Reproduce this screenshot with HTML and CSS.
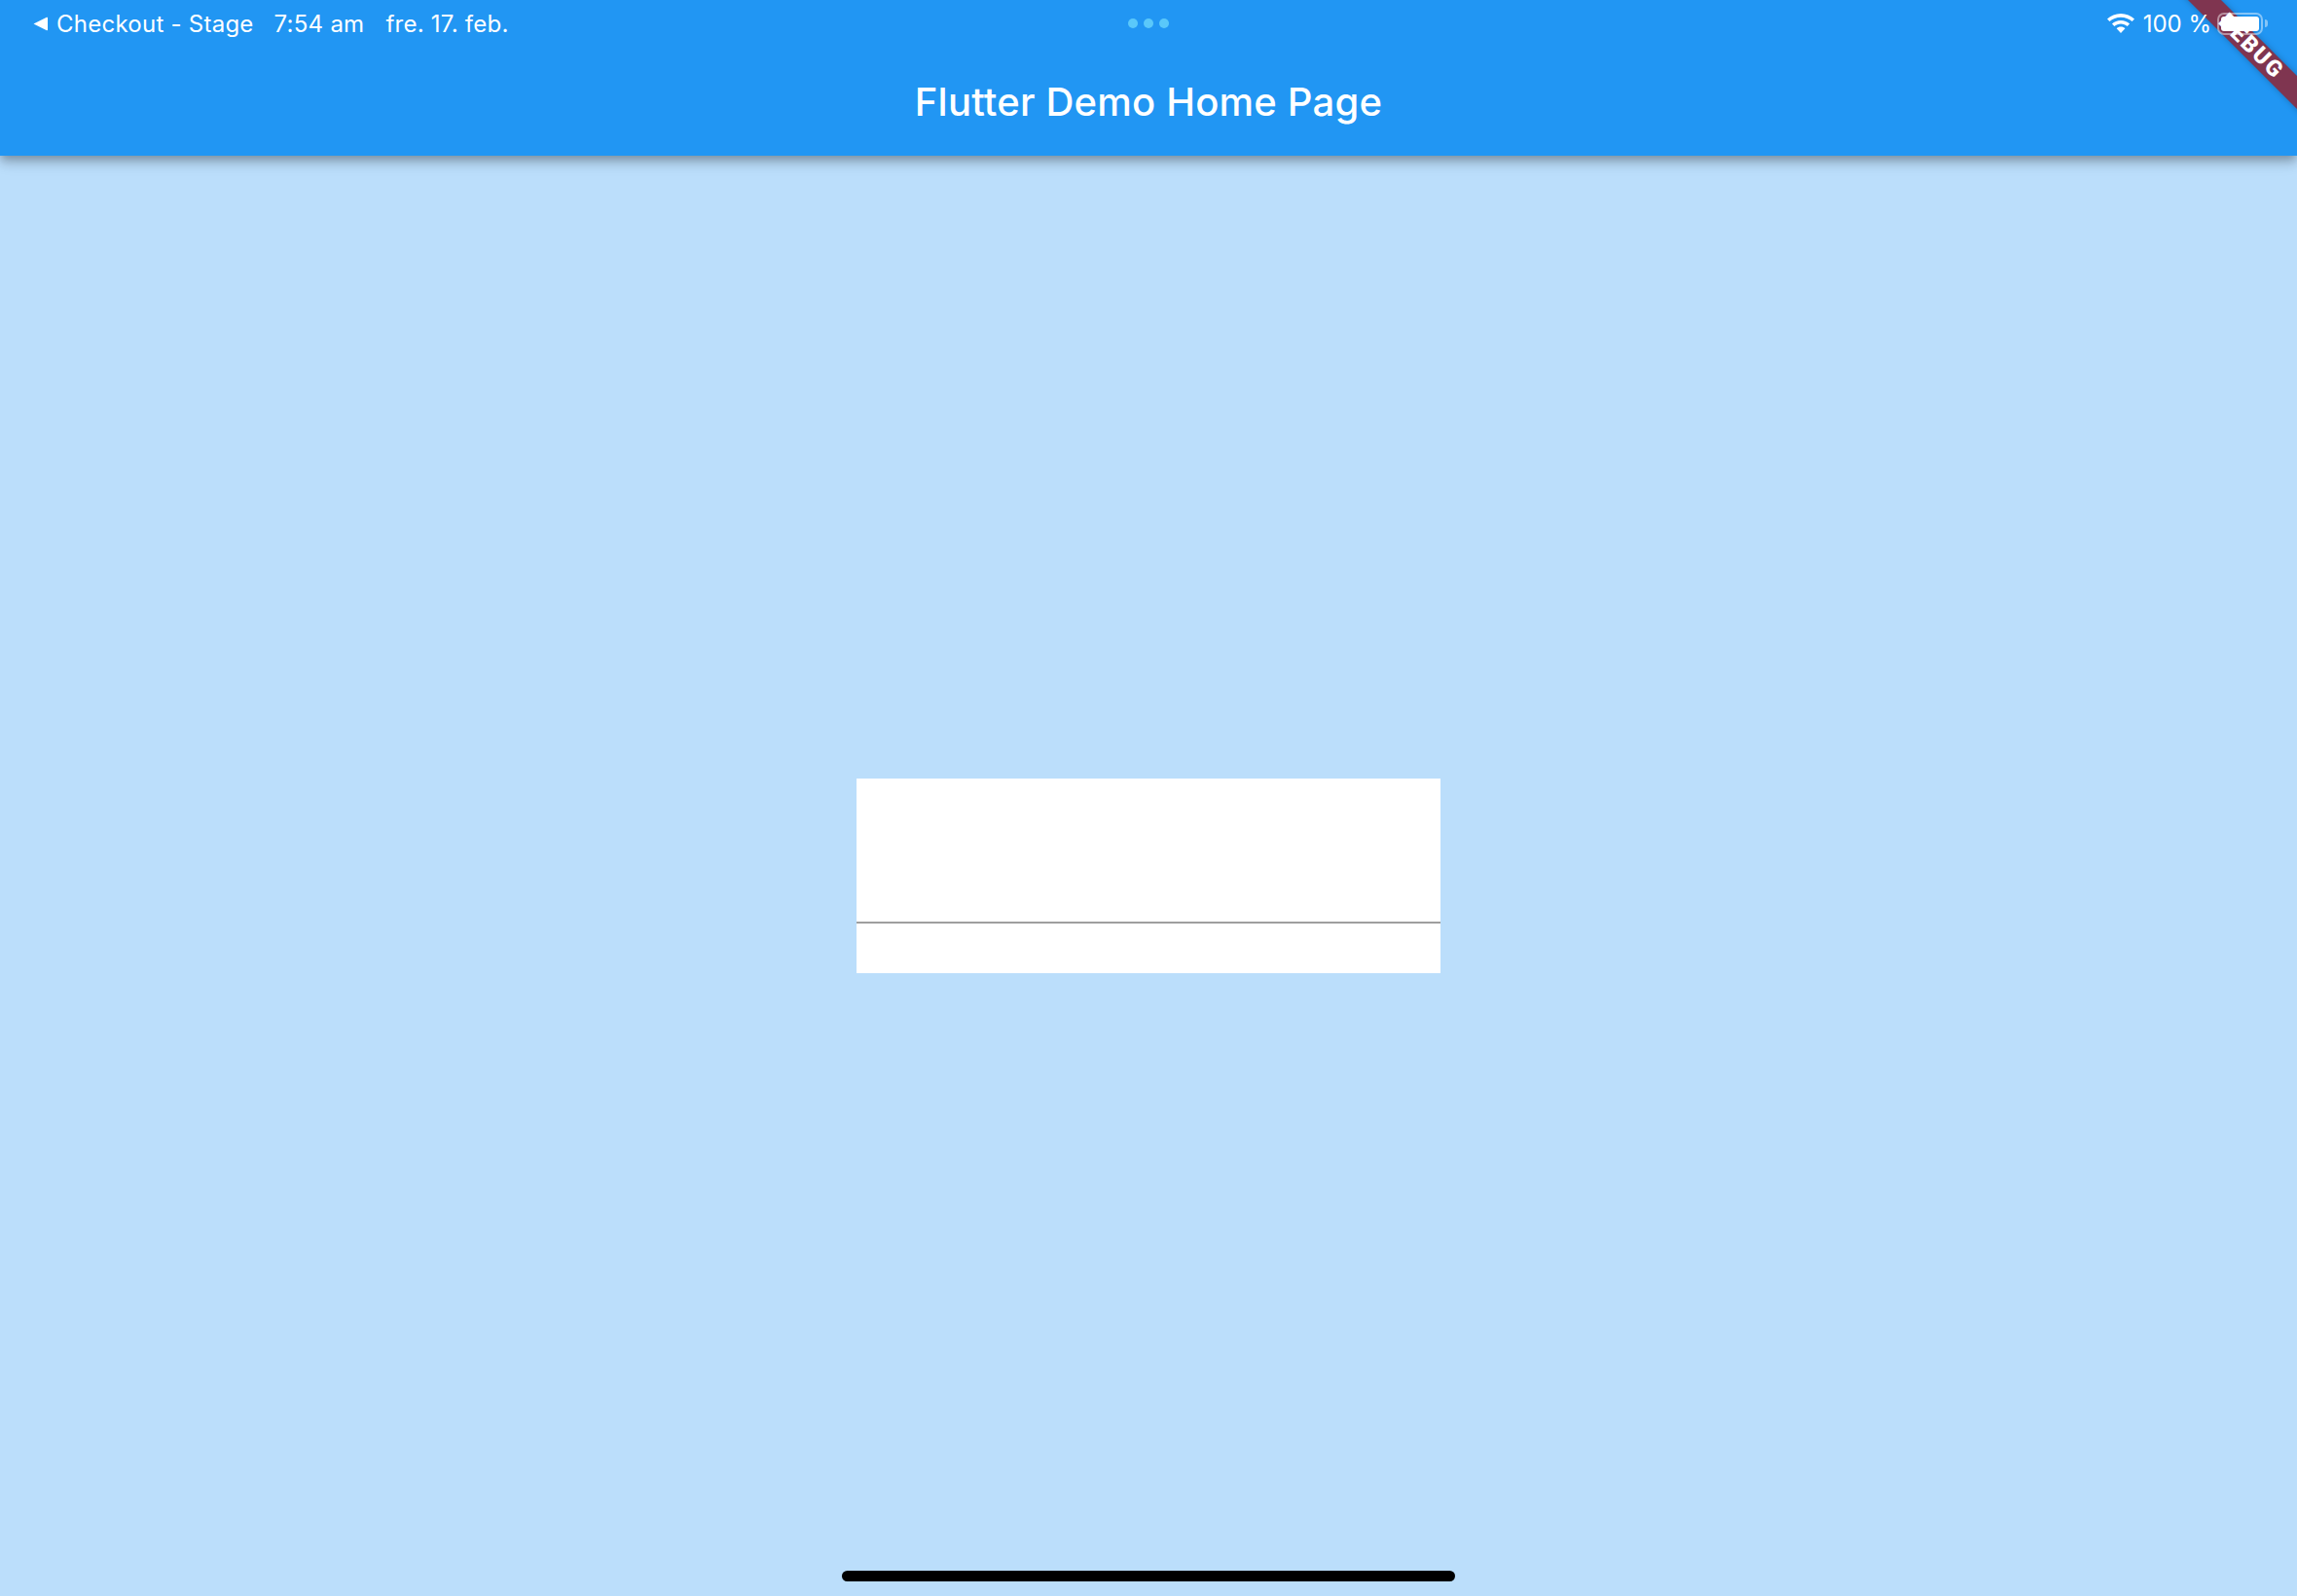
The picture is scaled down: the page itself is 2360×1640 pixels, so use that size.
FILE: index.html
```html
<!DOCTYPE html>
<html>
<head>
	<link rel="stylesheet" href="styles.css">
</head>
<body>
    <div id="page">
        <div id="app_bar">
            <div id="status_bar">
                <div class="status_left">
                    <svg class="back_arrow" width="15" height="15" viewBox="0 0 15 15"><path d="M.5 7.500 14 .8Q15 .4 15 1.500V13.500Q15 14.600 14 14.200Z" fill="#fff"/></svg>
                    <span class="back_label">Checkout - Stage</span>
                    <span class="clock">7:54 am</span>
                    <span class="date">fre. 17. feb.</span>
                </div>
                <div class="status_dots"><i></i><i></i><i></i></div>
                <div class="status_right">
                    <svg class="wifi" width="28" height="20" viewBox="1.9 1.200 24.200 18.300" preserveAspectRatio="none">
                        <path d="M14 4.600c3.900 0 7.400 1.500 10 4l2.100-2.300C22.900 3.200 18.700 1.200 14 1.200S5.100 3.200 1.900 6.300L4 8.600c2.600-2.500 6.100-4 10-4Z" fill="#fff"/>
                        <path d="M14 10.800c2.200 0 4.200.9 5.700 2.300l2.100-2.300c-2-2-4.800-3.200-7.800-3.200s-5.800 1.200-7.800 3.200l2.100 2.300c1.500-1.400 3.500-2.300 5.700-2.300Z" fill="#fff"/>
                        <path d="M14 13.600c-1.500 0-2.800.6-3.800 1.500L14 19.500l3.800-4.400c-1-.9-2.300-1.500-3.800-1.500Z" fill="#fff"/>
                    </svg>
                    <span class="battery_label">100 %</span>
                    <div class="battery"><div class="battery_fill"></div></div>
                    <div class="battery_nub"></div>
                </div>
            </div>
            <div id="title">Flutter Demo Home Page</div>
        </div>
        <div id="content">
            <div id="field">
                <div class="field_line"></div>
            </div>
        </div>
    </div>

    <div id="debug_banner">DEBUG</div>
    <div id="home_bar"></div>
</body>
</html>
```

FILE: styles.css
```css
html, body {
	margin: 0;
	padding: 0;
}
body {
	width: 2360px;
	height: 1640px;
	overflow: hidden;
	position: relative;
	background-color: #bbdefb;
	font-family: "Roboto", sans-serif;
	color: #fff;
}
#page {
	height: 1640px;
	display: flex;
	flex-direction: column;
}
#app_bar {
	height: 160px;
	flex: none;
	background-color: #2196f3;
	box-shadow: 0 4px 8px -2px rgba(0,0,0,.2), 0 8px 10px rgba(0,0,0,.14), 0 2px 20px rgba(0,0,0,.12);
	position: relative;
}
#status_bar {
	height: 48px;
	padding: 0 30px;
	display: grid;
	grid-template-columns: 1fr auto 1fr;
	align-items: center;
	font-family: "Inter", sans-serif;
	font-size: 24px;
	letter-spacing: 0.25px;
	position: relative;
	z-index: 3;
}
.status_left {
	display: flex;
	align-items: center;
}
.back_arrow {
	margin-left: 4px;
}
.back_label {
	margin-left: 9px;
	margin-right: 21px;
}
.clock {
	margin-right: 22px;
}
.status_dots {
	display: flex;
	gap: 6px;
}
.status_dots i {
	display: block;
	width: 10px;
	height: 10px;
	border-radius: 50%;
	background-color: #5ac8fa;
}
.status_right {
	display: flex;
	align-items: center;
	justify-content: flex-end;
}
.battery_label {
	margin-left: 9px;
	margin-right: 6px;
	letter-spacing: 0;
}
.battery {
	width: 47px;
	height: 23px;
	box-sizing: border-box;
	padding: 2px;
	border: 2px solid rgba(255,255,255,.45);
	border-radius: 7px;
}
.battery_fill {
	height: 100%;
	background-color: #fff;
	border-radius: 3px;
}
.battery_nub {
	width: 3px;
	height: 8px;
	margin-left: 2px;
	background-color: rgba(255,255,255,.45);
	border-radius: 0 3px 3px 0;
}
#title {
	height: 112px;
	display: flex;
	align-items: center;
	justify-content: center;
	font-family: "Inter", sans-serif;
	font-size: 40px;
	font-weight: 500;
	letter-spacing: 0.2px;
}
#content {
	flex: 1;
	display: flex;
	align-items: center;
	justify-content: center;
}
#field {
	width: 600px;
	height: 200px;
	padding-top: 147px;
	box-sizing: border-box;
	background-color: #fff;
}
.field_line {
	height: 2px;
	background-color: #9e9e9e;
}
/* banner and home bar sit over the page */
#debug_banner {
	position: absolute;
	left: 2190px;
	top: 33px;
	width: 240px;
	height: 24px;
	line-height: 24px;
	transform: rotate(45deg);
	background-color: #7f3550;
	box-shadow: 0 0 6px rgba(0,0,0,.25);
	text-align: center;
	text-indent: 8px;
	font-family: "Roboto", sans-serif;
	font-size: 23px;
	font-weight: 900;
	letter-spacing: 2px;
	z-index: 2;
}
#home_bar {
	position: absolute;
	left: 865px;
	top: 1614px;
	width: 630px;
	height: 11px;
	border-radius: 6px;
	background-color: #000;
}
```
